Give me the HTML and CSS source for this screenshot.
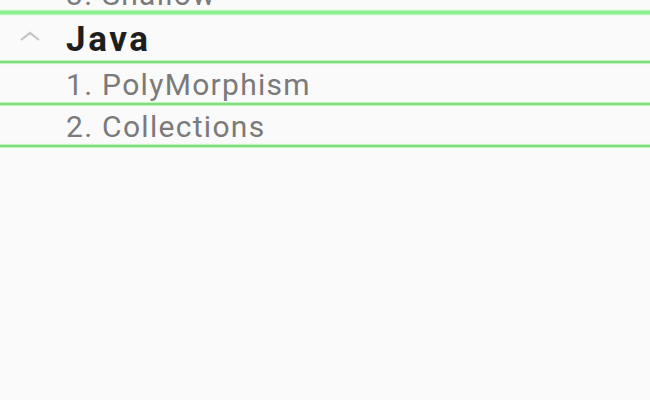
FILE: index.html
```html
<!DOCTYPE html>
<html>
<head>
<meta charset="utf-8">
<link rel="stylesheet" href="styles.css">
</head>
<body>
<div class="list">
  <div class="row child clip">3. Shallow</div>
  <div class="sep thick"></div>
  <div class="row group">
    <span class="chev"><svg width="24" height="12" viewBox="0 0 24 12"><path d="M3 10 L12 3 L21 10" fill="none" stroke="#c4c4c4" stroke-width="2.2"/></svg></span>
    <span class="gtitle">Java</span>
  </div>
  <div class="sep"></div>
  <div class="row child">1. PolyMorphism</div>
  <div class="sep"></div>
  <div class="row child">2. Collections</div>
  <div class="sep"></div>
</div>
</body>
</html>
```
FILE: styles.css
```css
html, body { margin: 0; padding: 0; background: #fafafa; }
body { width: 650px; height: 400px; overflow: hidden; font-family: Roboto, "Liberation Sans", sans-serif; }
.list { display: flex; flex-direction: column; margin-top: -29px; }
.row { display: flex; align-items: center; box-sizing: border-box; }
.child { height: 40px; padding-left: 66px; padding-top: 2px; font-size: 30px; letter-spacing: 1.3px; color: #7a7a7a; }
.clip { padding-top: 6px; }
.group { height: 47px; padding-left: 18px; padding-top: 4px; }
.chev { width: 48px; display: flex; align-items: center; margin-top: -8px; }
.gtitle { font-size: 35px; font-weight: bold; letter-spacing: 2.6px; color: #1e1e1e; }
.sep { height: 2px; background: #7fdc7f; box-shadow: 0 0 1px 1px #b8f5b8; }
.sep.thick { height: 3px; background: #8dee8d; }
```
